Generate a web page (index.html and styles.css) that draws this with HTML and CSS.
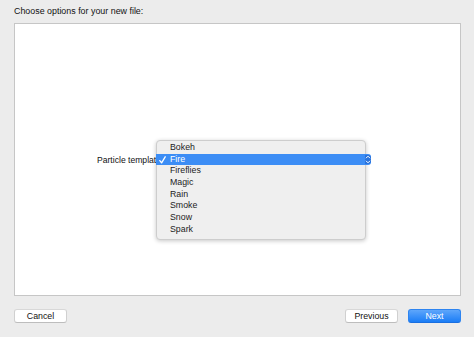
FILE: index.html
```html
<!DOCTYPE html>
<html>
<head>
<meta charset="utf-8">
<link rel="stylesheet" href="styles.css">
</head>
<body>
<div class="window">
  <div class="title">Choose options for your new file:</div>
  <div class="panel">
    <div class="field">
      <span class="label">Particle template:</span>
      <div class="menu">
        <div class="item">Bokeh</div>
        <div class="item selected"><svg class="check" width="7" height="8" viewBox="0 0 7 8"><path d="M0.8 4.6 L2.6 6.9 L6.2 0.8" fill="none" stroke="#fff" stroke-width="1.3" stroke-linecap="round" stroke-linejoin="round"/></svg>Fire<svg class="arrows" width="6" height="9" viewBox="0 0 6 9"><path d="M1 3.2 L3 1.2 L5 3.2 M1 5.8 L3 7.8 L5 5.8" fill="none" stroke="#fff" stroke-width="1"/></svg></div>
        <div class="item">Fireflies</div>
        <div class="item">Magic</div>
        <div class="item">Rain</div>
        <div class="item">Smoke</div>
        <div class="item">Snow</div>
        <div class="item">Spark</div>
      </div>
    </div>
  </div>
  <div class="footer">
    <button class="btn">Cancel</button>
    <div class="right">
      <button class="btn">Previous</button>
      <button class="btn primary">Next</button>
    </div>
  </div>
</div>
</body>
</html>
```
FILE: styles.css
```css
html, body {
  margin: 0;
  padding: 0;
}
body {
  background: #ececec;
  font-family: "Liberation Sans", Arial, sans-serif;
  color: #262626;
}
.window {
  width: 474px;
  height: 337px;
  box-sizing: border-box;
  background: #ececec;
  display: flex;
  flex-direction: column;
}
.title {
  height: 23px;
  box-sizing: border-box;
  padding: 6px 0 0 14px;
  font-size: 8.9px;
  line-height: 11px;
  color: #111;
}
.panel {
  margin: 0 13px 0 14px;
  height: 273px;
  box-sizing: border-box;
  background: #ffffff;
  border: 1px solid #c6c6c6;
  display: flex;
  align-items: center;
  padding-left: 82px;
}
.field {
  position: relative;
  height: 12px;
  display: flex;
  align-items: center;
}
.label {
  font-size: 8.6px;
  line-height: 12px;
  color: #111;
  white-space: nowrap;
}
.menu {
  position: absolute;
  left: 59px;
  top: -13.5px;
  width: 210px;
  box-sizing: border-box;
  padding: 1px 0 3px 0;
  background: #efefef;
  border: 1px solid #cdcdcd;
  border-radius: 4px;
  box-shadow: 0 1px 4px rgba(0, 0, 0, 0.22);
}
.item {
  height: 11.7px;
  line-height: 11.7px;
  font-size: 8.8px;
  padding-left: 13px;
  color: #1c1c1c;
  position: relative;
}
.item.selected {
  background: #3c8df5;
  color: #ffffff;
  margin: 0 -6px 0 -1px;
  padding-left: 14px;
  border-radius: 0 3px 3px 0;
}
.check {
  position: absolute;
  left: 3px;
  top: 2px;
  width: 7px;
  height: 8px;
}
.arrows {
  position: absolute;
  right: 0;
  top: 1.3px;
  width: 6px;
  height: 9px;
  background: #2a73dc;
  border-radius: 0 3px 3px 0;
}
.footer {
  margin: 13px 13px 0 14px;
  display: flex;
  justify-content: space-between;
}
.right {
  display: flex;
  gap: 10px;
}
.btn {
  width: 53px;
  height: 14px;
  box-sizing: border-box;
  padding: 0;
  border: 1px solid #d0d0d0;
  border-top-color: #d8d8d8;
  border-bottom-color: #bdbdbd;
  border-radius: 3px;
  background: #ffffff;
  font-family: "Liberation Sans", Arial, sans-serif;
  font-size: 8.8px;
  line-height: 12px;
  color: #111;
}
.btn.primary {
  background: linear-gradient(#5ea6fb, #1b7df6);
  border-color: #2d84f0;
  border-bottom-color: #1a6fe0;
  color: #ffffff;
}
```
